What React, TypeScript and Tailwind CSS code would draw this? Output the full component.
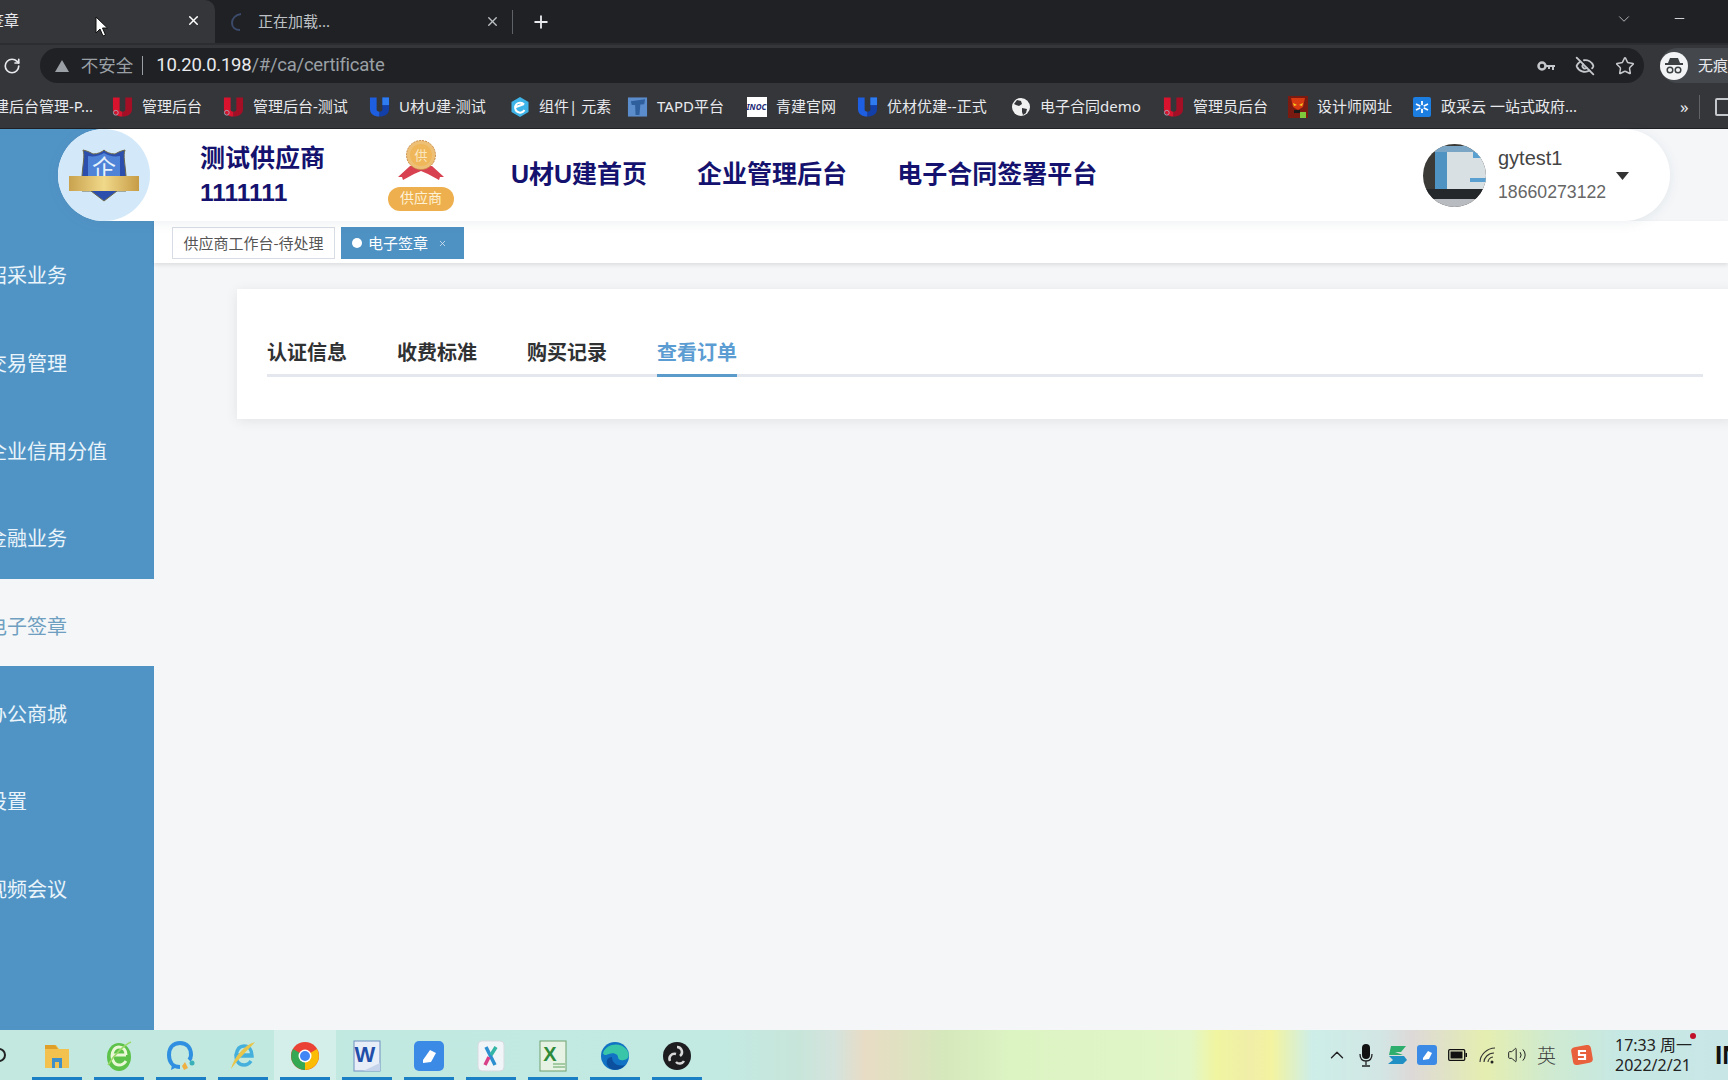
import { ChevronDown, ChevronUp, EyeOff, Minus, Plus, RotateCw, Star, Volume2, X } from 'lucide-react';
import type { ReactNode } from 'react';

function UMark({ blue }: { blue?: boolean }) {
  const main = blue ? '#1d5fe0' : '#d9122e';
  const dark = blue ? '#123fa8' : '#a50f26';
  return (
    <svg width="22" height="22" viewBox="0 0 22 22">
      <path d="M1 1h7v13c0 1 1 2 3 2v5C5 21 1 18 1 13z" fill={main} />
      <path d="M14 1h7v12c0 5-4 8-10 8v-5c2 0 3-1 3-2z" fill={dark} />
      {!blue && <circle cx="4" cy="17" r="2.5" fill="none" stroke="#b0a0b0" strokeWidth="1" />}
      {blue && <path d="M14 1h7v8h-7z" fill="#2f7cf0" />}
    </svg>
  );
}

function HexIcon() {
  return (
    <svg width="20" height="22" viewBox="0 0 20 22">
      <path d="M10 1l8.5 5v10L10 21l-8.500-5V6z" fill="#3fb4e8" />
      <path d="M14 8.500a5 5 0 1 0 .5 5.500M6 11l8-3" fill="none" stroke="#fff" strokeWidth="2" />
    </svg>
  );
}

function TapdIcon() {
  return (
    <svg width="22" height="22" viewBox="0 0 22 22">
      <rect x="1" y="1" width="20" height="20" fill="#5b8ccb" />
      <path d="M4 5l15-2-1 5-4 .5-1 11H9L8.500 9 5 9z" fill="#2f5f9c" />
    </svg>
  );
}

function EnocIcon() {
  return (
    <span className="flex h-[20px] w-[20px] items-center justify-center bg-white text-[8px] italic font-bold leading-none text-[#1c2a78]">
      INOC
    </span>
  );
}

function GlobeIcon() {
  return (
    <svg width="20" height="20" viewBox="0 0 20 20">
      <circle cx="10" cy="10" r="9" fill="#f1f1f1" />
      <path d="M6 3l4 1 1 3-3 2-3-1-2-1zM11 11l5 1-1 4-3 2-1-3z" fill="#35363a" />
    </svg>
  );
}

function MaskIcon() {
  return (
    <svg width="20" height="22" viewBox="0 0 20 22">
      <rect width="20" height="22" fill="#7a1a10" />
      <path d="M3 2h14l-2 9-5 3-5-3z" fill="#d83a12" />
      <path d="M5 7l4 2-3 1zM15 7l-4 2 3 1z" fill="#f5d020" />
      <rect x="12" y="16" width="6" height="6" fill="#7fc93c" />
      <path d="M6 14h6v3H6z" fill="#1a1a1a" />
    </svg>
  );
}

function ZcyIcon() {
  return (
    <svg width="20" height="22" viewBox="0 0 20 22">
      <rect x="1" y="1" width="18" height="20" rx="2" fill="#1c7ee0" />
      <path d="M10 5v12M4 8l12 6M16 8L4 14" stroke="#fff" strokeWidth="1.800" />
      <circle cx="10" cy="11" r="2" fill="#1c7ee0" />
    </svg>
  );
}

const bookmarks: { icon: ReactNode; label: string; width: string }[] = [
  { icon: <UMark />, label: '管理后台', width: 'w-[62px]' },
  { icon: <UMark />, label: '管理后台-测试', width: 'w-[97px]' },
  { icon: <UMark blue />, label: 'U材U建-测试', width: 'w-[91px]' },
  { icon: <HexIcon />, label: '组件| 元素', width: 'w-[69px]' },
  { icon: <TapdIcon />, label: 'TAPD平台', width: 'w-[70px]' },
  { icon: <EnocIcon />, label: '青建官网', width: 'w-[62px]' },
  { icon: <UMark blue />, label: '优材优建--正式', width: 'w-[104px]' },
  { icon: <GlobeIcon />, label: '电子合同demo', width: 'w-[104px]' },
  { icon: <UMark />, label: '管理员后台', width: 'w-[75px]' },
  { icon: <MaskIcon />, label: '设计师网址', width: 'w-[75px]' },
  { icon: <ZcyIcon />, label: '政采云 一站式政府...', width: 'w-[138px]' },
];

const menu = ['招采业务', '交易管理', '企业信用分值', '金融业务', '电子签章', '办公商城', '设置', '视频会议'];
const tabs = ['认证信息', '收费标准', '购买记录', '查看订单'];

function BrowserChrome() {
  return (
    <div className="font-['Noto_Sans','Noto_Sans_CJK_SC',sans-serif] text-white">
      <div className="flex h-[43px] items-center bg-[#202124]">
        <div className="relative flex h-[43px] w-[215px] items-center justify-end overflow-hidden rounded-tr-[10px] bg-[#35363a] pr-[14px] pb-[2px]">
          <span className="absolute left-[-11px] text-[15px] text-[#e8eaed]">签章</span>
          <svg className="absolute left-[95px] top-[16px]" width="14" height="21" viewBox="0 0 14 21">
            <path d="M1 1v16l4-4 3 7 2.500-1-3-7h5z" fill="#fff" stroke="#111" strokeWidth="1" />
          </svg>
          <X size={15} strokeWidth={2.4} className="text-white" />
        </div>
        <div className="flex h-[43px] w-[297px] items-center border-r-0 pl-[14px] pr-[12px]">
          <svg width="18" height="20" viewBox="0 0 18 20">
            <path d="M12 2C6 3 3 7 3 11s3 7 8 7" fill="none" stroke="#3b4a6b" strokeWidth="2" />
          </svg>
          <span className="ml-[11px] flex-1 text-[15px] text-[#bdc1c6]">正在加载...</span>
          <X size={15} strokeWidth={2.2} className="text-[#bdc1c6]" />
        </div>
        <div className="h-[24px] w-px bg-[#5f6368]" />
        <Plus size={20} strokeWidth={2.2} className="ml-[18px] text-[#e8eaed]" />
        <div className="flex-1" />
        <ChevronDown size={18} strokeWidth={1.2} className="mb-[6px] mr-[39px] text-[#bdc1c6]" />
        <Minus size={15} strokeWidth={1.4} className="mb-[6px] mr-[41px] text-[#e8eaed]" />
      </div>
      <div className="flex h-[42px] items-start border-t-[2px] border-[#2c2d30] bg-[#35363a] pt-[3px]">
        <div className="flex h-[35px] w-[40px] items-center pl-[3px]">
          <RotateCw size={18} strokeWidth={2.2} className="text-[#e8eaed]" />
        </div>
        <div className="flex h-[35px] w-[1612px] items-center rounded-full bg-[#202124] pl-[14px] pr-[9px]">
          <svg width="16" height="14" viewBox="0 0 16 14">
            <path d="M8 1l7 12H1z" fill="#9aa0a6" />
          </svg>
          <span className="ml-[11px] text-[17.500px] text-[#9aa0a6]">不安全</span>
          <span className="ml-[9px] mr-[15px] h-[19px] w-px bg-[#9aa0a6]" />
          <span className="-ml-[2px] font-['Roboto',sans-serif] text-[18.500px] tracking-[-0.25px] text-[#e8eaed]">10.20.0.198</span>
          <span className="font-['Roboto',sans-serif] text-[18.500px] tracking-[-0.25px] text-[#9aa0a6]">/#/ca/certificate</span>
          <div className="flex-1" />
          <svg width="18" height="12" viewBox="0 0 18 12" className="mr-[20px]">
            <circle cx="5" cy="6" r="3.500" fill="none" stroke="#c4c7cb" strokeWidth="2.500" />
            <path d="M9 5h9v2h-1v3h-2V7h-2v2h-2V7H9z" fill="#c4c7cb" />
          </svg>
          <EyeOff size={20} strokeWidth={2.2} className="mr-[20px] text-[#c4c7cb]" />
          <Star size={20} strokeWidth={1.8} className="text-[#c4c7cb]" />
        </div>
        <div className="ml-[16px] flex h-[35px] flex-1 items-center rounded-l-full bg-[#44474c]">
          <svg width="28" height="28" viewBox="0 0 28 28" className="shrink-0">
            <circle cx="14" cy="14" r="14" fill="#f1f3f4" />
            <path d="M8 11l2-5h8l2 5z" fill="#3c4043" />
            <rect x="5" y="11" width="18" height="2" fill="#3c4043" />
            <circle cx="10" cy="18" r="2.800" fill="none" stroke="#3c4043" strokeWidth="1.500" />
            <circle cx="18" cy="18" r="2.800" fill="none" stroke="#3c4043" strokeWidth="1.500" />
          </svg>
          <span className="ml-[10px] whitespace-nowrap text-[15px] text-[#e8eaed]">无痕</span>
        </div>
      </div>
      <div className="flex h-[44px] items-center border-b border-[#1f2023] bg-[#35363a] text-[15px] text-[#e8eaed]">
        <span className="-ml-[6px] w-[118px] shrink-0 whitespace-nowrap">建后台管理-P...</span>
        {bookmarks.map((b, i) => (
          <div key={i} className="mr-[19px] flex shrink-0 items-center gap-[9px]">
            <div className="flex w-[21px] justify-center">{b.icon}</div>
            <span className={`${b.width} whitespace-nowrap`}>{b.label}</span>
          </div>
        ))}
        <span className="ml-[82px] shrink-0 text-[17px] text-[#e8eaed]">»</span>
        <span className="ml-[10px] h-[24px] w-px shrink-0 bg-[#5f6368]" />
        <span className="ml-[15px] h-[18px] w-[18px] shrink-0 rounded-[2px] border-2 border-[#c4c7cb]" />
      </div>
    </div>
  );
}

function ShieldLogo() {
  return (
    <svg width="70" height="54" viewBox="0 0 70 54">
      <defs>
        <linearGradient id="gold" x1="0" x2="1" y1="0" y2="0">
          <stop offset="0" stopColor="#c9a24e" />
          <stop offset="0.5" stopColor="#f0d98a" />
          <stop offset="1" stopColor="#c79c46" />
        </linearGradient>
      </defs>
      <path d="M14 2c5 1 8 3 10 4 5 0 9-2 11-4 2 2 6 4 11 4 2-1 5-3 10-4-2 6 0 12 1 26v15H48L35 53 22 43H13V28c1-14 3-20 1-26z" fill="#2c4fae" stroke="#6d6a4a" strokeWidth="1" />
      <path d="M19 8c6 1 11 0 16-3 5 3 10 4 16 3v22H19z" fill="#4e83d8" />
      <text x="35" y="29" textAnchor="middle" fontSize="24" fill="#e6f2fb" fontFamily="Noto Sans CJK SC">企</text>
      <rect x="0" y="28" width="70" height="15" fill="url(#gold)" />
    </svg>
  );
}

function MedalBadge() {
  return (
    <div className="flex flex-col items-center">
      <svg width="50" height="42" viewBox="0 0 50 42">
        <path d="M14 26L2 37l4 0 1 3 11-6 7-3 7 3 11 6 1-3 4 0-12-11z" fill="#d8414f" />
        <circle cx="25" cy="15" r="14.500" fill="#eec075" stroke="#c98d4a" strokeWidth="1" strokeDasharray="2 1" />
        <circle cx="25" cy="15" r="11" fill="#efb65a" />
        <text x="25" y="20" textAnchor="middle" fontSize="13" fill="#fbe7bf" fontFamily="Noto Sans CJK SC">供</text>
      </svg>
      <span className="mt-[5px] flex h-[24px] w-[66px] items-center justify-center rounded-full bg-[#eeb04e] text-[14px] text-[#fdf1d6]">
        供应商
      </span>
    </div>
  );
}

function Avatar() {
  return (
    <svg width="63" height="63" viewBox="0 0 63 63" className="shrink-0 rounded-full blur-[0.6px]">
      <rect width="63" height="63" fill="#3b3a36" />
      <rect x="12" y="2" width="51" height="6" fill="#7aa5c4" />
      <rect x="12" y="8" width="12" height="37" fill="#4f93c2" />
      <rect x="24" y="8" width="39" height="37" fill="#d9e0e4" />
      <rect x="50" y="8" width="13" height="6" fill="#5aa1d2" />
      <rect x="47" y="34" width="16" height="4" fill="#5aa1d2" />
      <rect x="0" y="45" width="63" height="10" fill="#25282b" />
      <rect x="0" y="55" width="63" height="8" fill="#b8bcc0" />
    </svg>
  );
}

function PageHeader() {
  return (
    <div className="absolute left-[58px] top-0 z-10 flex h-[92px] w-[1612px] items-center rounded-full bg-white shadow-[0_2px_12px_rgba(90,110,130,0.10)] font-['Liberation_Sans','Noto_Sans_CJK_SC',sans-serif]">
      <div className="flex h-[92px] w-[92px] shrink-0 items-center justify-center rounded-full bg-[#d3e9f9]">
        <ShieldLogo />
      </div>
      <div className="ml-[50px] w-[188px] font-bold text-[#14126e]">
        <div className="text-[25px] leading-[34px]">测试供应商</div>
        <div className="mt-[1px] text-[24.500px] leading-[34px]">1111111</div>
      </div>
      <MedalBadge />
      <div className="ml-[57px] flex gap-[50px] text-[25px] font-bold text-[#14126e]">
        <span>U材U建首页</span>
        <span>企业管理后台</span>
        <span>电子合同签署平台</span>
      </div>
      <div className="flex-1" />
      <Avatar />
      <div className="ml-[12px] w-[118px]">
        <div className="text-[20px] leading-[32px] text-[#444]">gytest1</div>
        <div className="mt-[2px] text-[17.700px] leading-[32px] text-[#666]">18660273122</div>
      </div>
      <svg width="13" height="8" viewBox="0 0 13 8" className="mb-[-2px] mr-[41px]">
        <path d="M0 0h13L6.500 8z" fill="#333" />
      </svg>
    </div>
  );
}

function Sidebar() {
  return (
    <aside className="flex w-[154px] shrink-0 flex-col bg-[#5094c6] pt-[99px] font-['Noto_Sans_CJK_SC',sans-serif] text-[20px]">
      {menu.map((m) => (
        <div
          key={m}
          className={
            m === '电子签章'
              ? 'flex h-[87.7px] items-center whitespace-nowrap bg-[#f4f6f8] pt-[7px] text-[#6f9fc0]'
              : 'flex h-[87.7px] items-center whitespace-nowrap pt-[7px] text-[#eaf4fa]'
          }
        >
          <span className="-ml-[13px]">{m}</span>
        </div>
      ))}
    </aside>
  );
}

function Main() {
  return (
    <main className="min-w-0 flex-1 pt-[92px] font-['Noto_Sans_CJK_SC',sans-serif]">
      <div className="flex h-[42px] items-start gap-[6px] bg-white pl-[18px] pt-[6px] shadow-[0_2px_4px_rgba(0,0,0,0.10)]">
        <span className="flex h-[32px] w-[163px] items-center justify-center border border-[#d8dce5] text-[15px] text-[#555]">
          供应商工作台-待处理
        </span>
        <span className="flex h-[32px] w-[123px] items-center bg-[#4e91c3] pl-[11px] text-[15px] text-white">
          <span className="mr-[6px] h-[10px] w-[10px] rounded-full bg-white" />
          电子签章
          <X size={9} strokeWidth={2} className="ml-[10px] text-[#dfeaf3]" />
        </span>
      </div>
      <div className="ml-[83px] mt-[26px] h-[130px] w-[1496px] bg-white px-[30px] pt-[43px] shadow-[0_2px_12px_rgba(0,0,0,0.08)]">
        <div className="flex h-[45px] gap-[50px] border-b-[3px] border-[#e4e7ed]">
          {tabs.map((t) => (
            <div
              key={t}
              className={
                t === '查看订单'
                  ? 'mb-[-3px] h-[45px] border-b-[3px] border-[#5a9bcc] text-[20px] font-bold leading-[40px] text-[#5b9dd2]'
                  : 'text-[20px] font-bold leading-[40px] text-[#303133]'
              }
            >
              {t}
            </div>
          ))}
        </div>
      </div>
    </main>
  );
}

function FolderIcon() {
  return (
    <svg width="28" height="28" viewBox="0 0 28 28">
      <path d="M2 3h11l3 4h10v19H2z" fill="#f2c14e" />
      <path d="M2 3h10l3 4H2z" fill="#e0a028" />
      <path d="M9 16h10v10h-3v-6h-4v6H9z" fill="#3f8fc9" />
    </svg>
  );
}
function GreenE() {
  return (
    <svg width="30" height="34" viewBox="0 0 30 34">
      <ellipse cx="15" cy="18" rx="12" ry="14" fill="#5cc24a" />
      <path d="M8 16h14M22 16c0-5-3-8-7-8s-7 4-7 9 3 9 7 9c3 0 5-1 7-4" fill="none" stroke="#eaf8d8" strokeWidth="3" />
      <path d="M4 26C10 16 20 6 27 3" fill="none" stroke="#9bd96a" strokeWidth="1.500" />
    </svg>
  );
}
function ChatQ() {
  return (
    <svg width="30" height="32" viewBox="0 0 30 32">
      <path d="M14 27C7 27 3 22 3 15S7 3 14 3s11 5 11 12c0 2-1 4-2 5" fill="none" stroke="#2f8fe0" strokeWidth="4" />
      <path d="M6 25l-1 5 6-3" fill="#2f8fe0" />
      <path d="M19 22l3 6-4 2-2-4z" fill="#f0b040" />
      <circle cx="26" cy="23" r="2.500" fill="#3ab1b8" />
    </svg>
  );
}
function BlueE() {
  return (
    <svg width="30" height="34" viewBox="0 0 30 34">
      <path d="M24 16H8M8 16c1-6 4-9 8-9 5 0 8 4 8 10H8c0 5 3 9 8 9 3 0 5-1 7-4" fill="none" stroke="#46b0dd" strokeWidth="3.500" />
      <path d="M3 30C6 18 16 6 27 3 23 8 10 20 3 30z" fill="#e8c64c" />
    </svg>
  );
}
function ChromeIcon() {
  return (
    <svg width="28" height="28" viewBox="0 0 28 28">
      <circle cx="14" cy="14" r="14" fill="#ea4335" />
      <path d="M14 14L2 7A14 14 0 0 0 14 28z" fill="#34a853" />
      <path d="M14 14l12-7a14 14 0 0 1-12 21z" fill="#fbbc05" />
      <circle cx="14" cy="14" r="6.500" fill="#fff" />
      <circle cx="14" cy="14" r="5" fill="#4285f4" />
    </svg>
  );
}
function WordIcon() {
  return (
    <svg width="28" height="32" viewBox="0 0 28 32">
      <rect x="1" y="1" width="26" height="30" fill="#e8eef8" stroke="#6f8fc0" />
      <text x="12" y="22" textAnchor="middle" fontSize="22" fontWeight="700" fontFamily="Liberation Sans" fill="#1f4fa8">W</text>
      <path d="M10 31l17-8v8z" fill="#c5d4ea" />
    </svg>
  );
}
function PenTile() {
  return (
    <svg width="30" height="30" viewBox="0 0 30 30">
      <rect width="30" height="30" rx="5" fill="#3b8ae6" />
      <path d="M9 19l7-10 6 3-5 9-8 1z" fill="#fff" />
    </svg>
  );
}
function XTile() {
  return (
    <svg width="28" height="32" viewBox="0 0 28 32">
      <rect x="1" y="1" width="26" height="30" rx="4" fill="#f2f5f8" stroke="#d5dbe0" />
      <path d="M9 7l9 18" stroke="#2b8fd0" strokeWidth="3.500" fill="none" />
      <path d="M19 7l-5 8" stroke="#35b5a5" strokeWidth="3.500" fill="none" />
      <path d="M8 25l4-8" stroke="#d8418a" strokeWidth="3.500" fill="none" />
    </svg>
  );
}
function ExcelIcon() {
  return (
    <svg width="28" height="32" viewBox="0 0 28 32">
      <rect x="1" y="1" width="26" height="30" fill="#e6f2e4" stroke="#6fa06f" />
      <text x="11" y="21" textAnchor="middle" fontSize="20" fontWeight="700" fontFamily="Liberation Sans" fill="#2c8a3a">X</text>
      <path d="M14 24h12M14 27h12" stroke="#8cbf8c" strokeWidth="1.500" />
    </svg>
  );
}
function EdgeIcon() {
  return (
    <svg width="30" height="30" viewBox="0 0 30 30">
      <circle cx="15" cy="15" r="14" fill="#1273c4" />
      <path d="M3 12C6 3 20 0 27 9c3 5 2 9-3 10-4 1-6-1-6-3 0-3-5-5-9-3-3 1-5 2-6-1z" fill="#38c5a8" />
      <path d="M12 16c0 6 5 10 13 8-3 4-9 6-14 4-6-3-6-12 1-12z" fill="#0b4f9e" />
    </svg>
  );
}
function ObsIcon() {
  return (
    <svg width="28" height="28" viewBox="0 0 28 28">
      <circle cx="14" cy="14" r="14" fill="#1d1d20" />
      <path d="M14 5a5 5 0 0 1 3 9M7 19a5 5 0 0 1 6-7M21 19a5 5 0 0 1-8 1" fill="none" stroke="#d8d8d8" strokeWidth="2.500" />
    </svg>
  );
}

const apps: { key: string; icon: ReactNode }[] = [
  { key: 'folder', icon: <FolderIcon /> },
  { key: 'ie-green', icon: <GreenE /> },
  { key: 'chat', icon: <ChatQ /> },
  { key: 'ie', icon: <BlueE /> },
  { key: 'chrome', icon: <ChromeIcon /> },
  { key: 'word', icon: <WordIcon /> },
  { key: 'pen', icon: <PenTile /> },
  { key: 'xmind', icon: <XTile /> },
  { key: 'excel', icon: <ExcelIcon /> },
  { key: 'edge', icon: <EdgeIcon /> },
  { key: 'obs', icon: <ObsIcon /> },
];

function Taskbar() {
  return (
    <div className="flex h-[50px] items-stretch bg-[linear-gradient(90deg,#c2e8df_0px,#c2eae2_720px,#c8e5da_800px,#d4e3dd_835px,#e8dcc5_865px,#d5e8bc_945px,#dcf3c2_1010px,#e2f6c8_1190px,#f0f5a0_1216px,#f0eea8_1250px,#f3f3a0_1272px,#cdeee8_1312px,#d2e6e4_1380px,#ddd9d8_1412px,#e5eeb0_1485px,#cfead0_1550px,#c6e8e4_1620px,#c8e6e6_1728px)] font-['Noto_Sans','Noto_Sans_CJK_SC',sans-serif]">
      <div className="flex w-[26px] items-center">
        <span className="-ml-[8px] h-[14px] w-[14px] rounded-full border-2 border-[#222]" />
      </div>
      {apps.map((a) => (
        <div
          key={a.key}
          className={
            a.key === 'chrome'
              ? 'flex w-[62px] flex-col items-center bg-white/30'
              : 'flex w-[62px] flex-col items-center'
          }
        >
          <div className="flex flex-1 items-center justify-center pt-[4px]">{a.icon}</div>
          <div className="h-[3px] w-[50px] bg-[#1a7fc4]" />
        </div>
      ))}
      <div className="flex-1" />
      <div className="flex items-center text-[#222]">
        <ChevronUp size={22} strokeWidth={1.5} className="mr-[11px]" />
        <svg width="14" height="24" viewBox="0 0 14 24" className="mr-[13px]">
          <rect x="3" y="1" width="8" height="15" rx="4" fill="#111" />
          <path d="M1 11c0 5 3 7 6 7s6-2 6-7M7 18v4M3 23h8" fill="none" stroke="#222" strokeWidth="1.300" />
        </svg>
        <svg width="22" height="20" viewBox="0 0 22 20" className="mr-[9px]">
          <path d="M5 1h15l-5 6H9l8 3H3z" fill="#2dae6c" />
          <path d="M3 11h15l3 4-4 4H2l5-4z" fill="#1f8fc4" />
        </svg>
        <svg width="20" height="20" viewBox="0 0 20 20" className="mr-[11px]">
          <rect width="20" height="20" rx="3" fill="#3b8ae6" />
          <path d="M6 13l5-7 4 2-3 6-6 1z" fill="#fff" />
        </svg>
        <svg width="19" height="12" viewBox="0 0 19 12" className="mr-[12px]">
          <rect x="0.700" y="0.700" width="16" height="10.600" rx="1" fill="none" stroke="#111" strokeWidth="1.300" />
          <rect x="2.500" y="2.500" width="12" height="7" fill="#111" />
          <rect x="17.500" y="4" width="1.500" height="4" fill="#111" />
        </svg>
        <svg width="17" height="17" viewBox="0 0 17 17" className="mr-[11px]">
          <path d="M1 15C1 8 8 1 16 1M5 15c0-4 4-9 10-9M9 15c0-2 2-5 5-5" fill="none" stroke="#333" strokeWidth="1.100" />
          <circle cx="13" cy="15" r="1.500" fill="#222" />
        </svg>
        <Volume2 size={20} strokeWidth={1.2} className="mr-[10px]" />
        <span className="mr-[15px] font-['Noto_Sans_CJK_SC',sans-serif] text-[19px] font-light text-[#444]">英</span>
        <svg width="22" height="20" viewBox="0 0 22 20" className="mr-[22px]">
          <rect x="1" y="1" width="20" height="18" rx="4" transform="rotate(-10 11 10)" fill="#e8603c" />
          <path d="M15 6H8v4h6v4H7" fill="none" stroke="#fff" strokeWidth="2.200" />
        </svg>
        <div className="relative w-[100px] text-[16px] leading-[20px] text-[#222]">
          <div>17:33 周一</div>
          <div>2022/2/21</div>
          <span className="absolute left-[75px] top-[-2px] h-[6px] w-[6px] rounded-full bg-[#c0102a]" />
        </div>
        <div className="w-[13px] overflow-hidden whitespace-nowrap font-['Liberation_Sans',sans-serif] text-[26px] font-bold leading-none text-[#111]">
          IN
        </div>
      </div>
    </div>
  );
}

export default function App() {
  return (
    <div className="flex h-[1080px] w-[1728px] flex-col overflow-hidden bg-[#f4f6f8] font-['Liberation_Sans','Noto_Sans_CJK_SC',sans-serif]">
      <BrowserChrome />
      <div className="relative flex min-h-0 flex-1">
        <PageHeader />
        <Sidebar />
        <Main />
      </div>
      <Taskbar />
    </div>
  );
}
